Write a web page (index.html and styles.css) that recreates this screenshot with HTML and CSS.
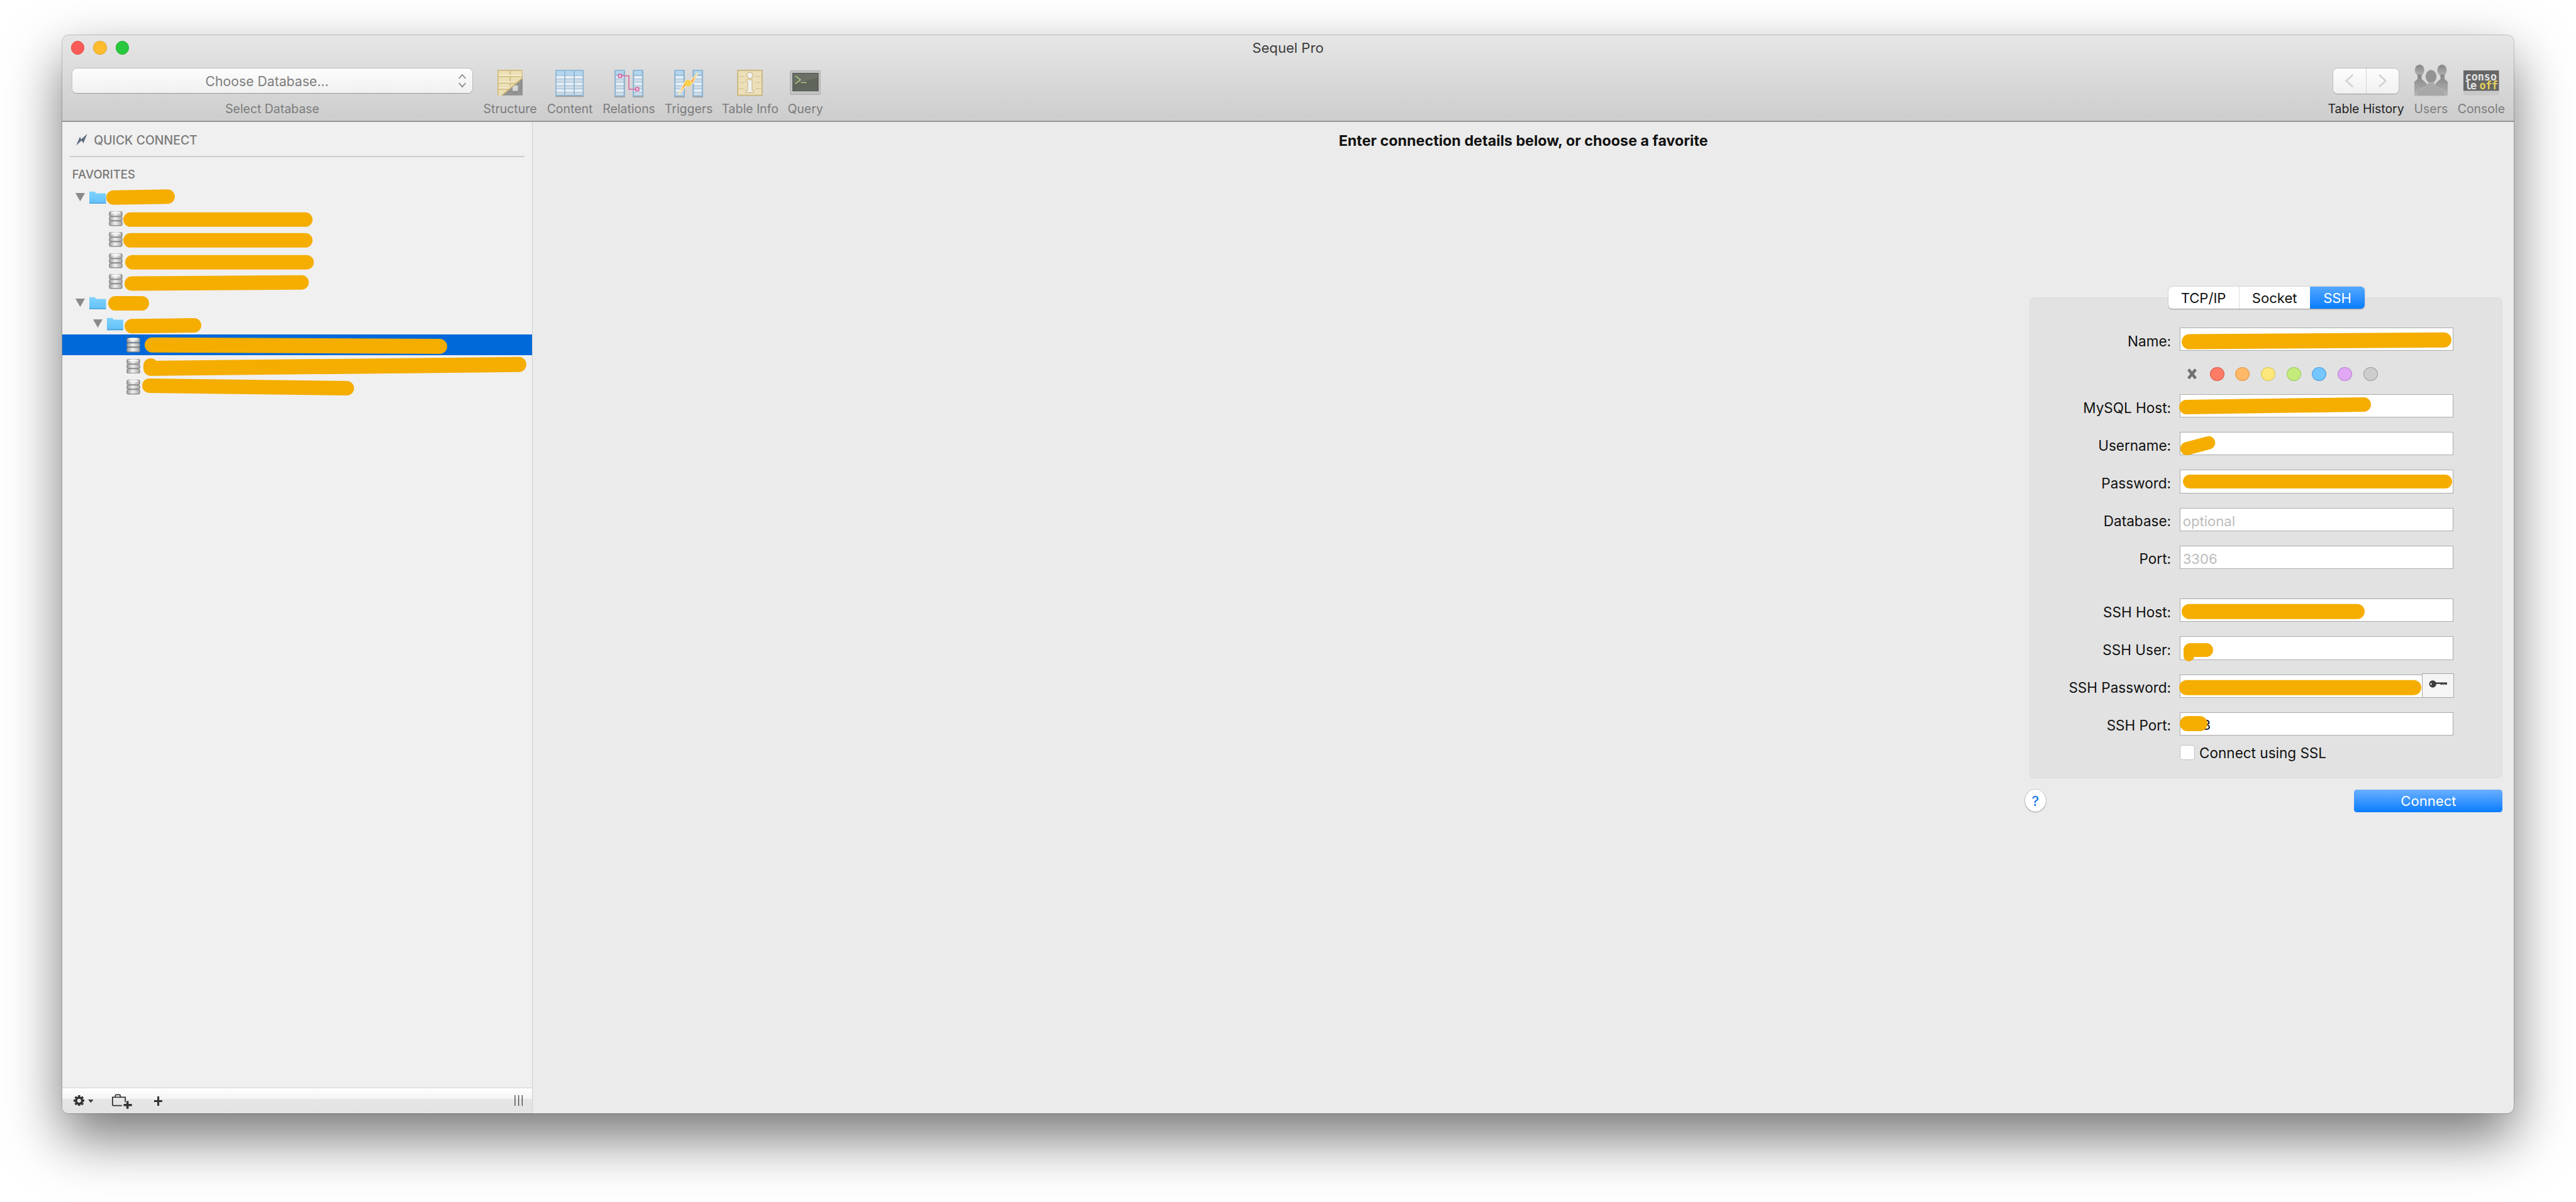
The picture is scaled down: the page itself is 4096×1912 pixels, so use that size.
FILE: index.html
```html
<!DOCTYPE html>
<html lang="en">
<head>
<meta charset="utf-8">
<title>Sequel Pro</title>
<link rel="stylesheet" href="styles.css">
</head>
<body>
<svg class="sprite" aria-hidden="true">
  <defs>
    <linearGradient id="blueFolder" x1="0" y1="0" x2="0" y2="1"><stop offset="0" stop-color="#7fd2fd"/><stop offset="1" stop-color="#62c0f8"/></linearGradient>
    <linearGradient id="cyl" x1="0" y1="0" x2="1" y2="0"><stop offset="0" stop-color="#9b9b9b"/><stop offset=".45" stop-color="#f2f2f2"/><stop offset="1" stop-color="#a5a5a5"/></linearGradient>
    <linearGradient id="person" x1="0" y1="0" x2="0" y2="1"><stop offset="0" stop-color="#858585"/><stop offset="1" stop-color="#b4b4b4"/></linearGradient>
    <g id="db">
      <rect x="1" y="2" width="23" height="8" rx="2" fill="url(#cyl)" stroke="#7f7f7f" stroke-width="1.2"/>
      <rect x="1" y="11" width="23" height="7" rx="2" fill="url(#cyl)" stroke="#7f7f7f" stroke-width="1.2"/>
      <rect x="1" y="19" width="23" height="8" rx="2" fill="url(#cyl)" stroke="#7f7f7f" stroke-width="1.2"/>
      <ellipse cx="12.5" cy="3.5" rx="9" ry="2" fill="#f6f6f6"/>
    </g>
    <g id="folder">
      <path d="M0 3a1 1 0 0 1 1-1h9l2 3h17a1 1 0 0 1 1 1v17a1 1 0 0 1-1 1H1a1 1 0 0 1-1-1z" fill="url(#blueFolder)"/>
      <rect y="22" width="30" height="2" fill="#4da6db"/>
    </g>
    <path id="tri" d="M0 0h17l-8.500 15z" fill="#8a8a8a"/>
    <g id="col">
      <rect y="2" width="19" height="48" rx="1" fill="#7d7d7d" opacity=".6"/>
      <rect width="19" height="48" rx="1" fill="#8fb6d3"/>
      <rect x="2.500" y="2" width="14" height="7" fill="#b4d6ef"/>
      <rect x="2.500" y="11" width="14" height="5" fill="#e8eff5"/>
      <rect x="2.500" y="17" width="14" height="5" fill="#cfdde8"/>
      <rect x="2.500" y="23" width="14" height="5" fill="#e8eff5"/>
      <rect x="2.500" y="29" width="14" height="5" fill="#cfdde8"/>
      <rect x="2.500" y="35" width="14" height="5" fill="#e8eff5"/>
      <rect x="2.500" y="41" width="14" height="5" fill="#cfdde8"/>
    </g>
  </defs>
</svg>
<div class="stage">
  <div class="window">
    <header class="chrome">
      <div class="titlebar">
        <div class="lights"><span class="light red"></span><span class="light amber"></span><span class="light green"></span></div>
        <div class="title">Sequel Pro</div>
        <div></div>
      </div>
      <div class="toolbar">
        <div class="tool w-db">
          <div class="tool-icon top-14">
            <div class="db-select">
              <span>Choose Database...</span>
              <svg class="stepper" viewBox="0 0 16 26"><path d="M2 9l6-7 6 7M2 17l6 7 6-7" fill="none" stroke="#8a8a8a" stroke-width="2"/></svg>
            </div>
          </div>
          <div class="tool-label">Select Database</div>
        </div>
        <div class="tool w-structure">
          <div class="tool-icon top-17">
            <svg class="i46" viewBox="0 0 46 46">
              <polygon points="0,0 46,0 46,14 8,46 0,46" fill="#ecdfb5"/>
              <path d="M1 46V1h44v13M23 1v28M1 12h44M1 24h30M1 35h18" fill="none" stroke="#d0bb7c" stroke-width="2"/>
              <path d="M2 10h42M2 22h28M2 33h17" stroke="#f6efd8" stroke-width="2"/>
              <polygon points="46,15 46,46 9,46" fill="#8f8f8f"/>
              <rect x="27" y="28" width="10" height="10" fill="#d6d6d6"/>
              <path d="M40 20v26M24 33v13M14 43h32" stroke="#a9a9a9" stroke-width="1" stroke-dasharray="2 2"/>
              <path d="M46 14L8 46" stroke="#c9b36e" stroke-width="2"/>
            </svg>
          </div>
          <div class="tool-label">Structure</div>
        </div>
        <div class="tool w-content">
          <div class="tool-icon top-17">
            <svg class="i51" viewBox="0 0 51 49">
              <rect y="2" width="51" height="47" fill="#7d7d7d" opacity=".6"/>
              <rect width="51" height="47" fill="#8fb6d3"/>
              <rect x="2" y="2" width="47" height="8" fill="#b4d6ef"/>
              <rect x="2" y="11" width="47" height="5" fill="#e8eff5"/>
              <rect x="2" y="17" width="47" height="5" fill="#cfdde8"/>
              <rect x="2" y="23" width="47" height="5" fill="#e8eff5"/>
              <rect x="2" y="29" width="47" height="5" fill="#cfdde8"/>
              <rect x="2" y="35" width="47" height="5" fill="#e8eff5"/>
              <rect x="2" y="41" width="47" height="4" fill="#cfdde8"/>
              <path d="M17 2v43M34 2v43" stroke="#8fb6d3" stroke-width="2"/>
            </svg>
          </div>
          <div class="tool-label">Content</div>
        </div>
        <div class="tool w-relations">
          <div class="tool-icon top-17">
            <svg class="i52" viewBox="0 0 52 50">
              <use href="#col"/><use href="#col" x="33"/>
              <path d="M9.500 11H26v24h15" fill="none" stroke="#d873ab" stroke-width="2"/>
              <rect x="7" y="8" width="6" height="6" fill="#f2b8d6" stroke="#c85f9b" stroke-width="1.500"/>
              <rect x="38" y="32" width="6" height="6" fill="#f2b8d6" stroke="#c85f9b" stroke-width="1.500"/>
            </svg>
          </div>
          <div class="tool-label">Relations</div>
        </div>
        <div class="tool w-triggers">
          <div class="tool-icon top-17">
            <svg class="i52" viewBox="0 0 52 50">
              <use href="#col"/><use href="#col" x="33"/>
              <polygon points="43,5 33,25 28,21 8,44 20,20 26,24" fill="#f6a241" stroke="#f7e6b4" stroke-width="2"/>
              <ellipse cx="25" cy="24" rx="6" ry="6" fill="#fbd04c"/>
            </svg>
          </div>
          <div class="tool-label">Triggers</div>
        </div>
        <div class="tool w-info">
          <div class="tool-icon top-17">
            <svg class="i46t" viewBox="0 0 46 47">
              <rect x="1" y="1" width="44" height="45" fill="#ecdfb9" stroke="#c6b377" stroke-width="2"/>
              <path d="M3 12h10M33 12h10M3 23h10M33 23h10M3 34h10M33 34h10" stroke="#d5c794" stroke-width="1.500"/>
              <circle cx="23" cy="10" r="5.500" fill="#f1f1f1" stroke="#cdbf8e" stroke-width="1.500"/>
              <path d="M17 18h10v19h3v4H16v-4h3V22h-2z" fill="#f1f1f1" stroke="#cdbf8e" stroke-width="1.500"/>
            </svg>
          </div>
          <div class="tool-label">Table Info</div>
        </div>
        <div class="tool w-query">
          <div class="tool-icon top-18">
            <svg class="i56" viewBox="0 0 56 44">
              <rect x=".5" y=".5" width="55" height="43" rx="2" fill="#c3c3c3" stroke="#a3a3a3"/>
              <rect x="5" y="5" width="46" height="32" fill="#5f655a" stroke="#4a4a4a"/>
              <polygon points="6,6 50,6 50,14 6,24" fill="#6a7065"/>
              <path d="M10 10l9 7-9 7M20 22h10" fill="none" stroke="#bcd68a" stroke-width="1.500"/>
            </svg>
          </div>
          <div class="tool-label">Query</div>
        </div>
        <div class="tool w-history push">
          <div class="tool-icon top-14">
            <div class="nav-pair">
              <span class="nav-seg"><svg class="chev" viewBox="0 0 16 24"><path d="M14 1L2 12l12 11" fill="none" stroke="#d2d2d2" stroke-width="3"/></svg></span>
              <span class="nav-seg"><svg class="chev" viewBox="0 0 16 24"><path d="M2 1l12 11L2 23" fill="none" stroke="#d2d2d2" stroke-width="3"/></svg></span>
            </div>
          </div>
          <div class="tool-label strong">Table History</div>
        </div>
        <div class="tool w-users">
          <div class="tool-icon top-5">
            <svg class="i64" viewBox="0 0 64 60">
              <g fill="url(#person)">
                <ellipse cx="10" cy="11" rx="9" ry="11"/>
                <path d="M0 60V33l6-5V19h8v9l6 5 6 7v20z"/>
                <ellipse cx="53" cy="11" rx="9" ry="11"/>
                <path d="M64 60V33l-6-5V19h-8v9l-6 5-6 7v20z"/>
              </g>
              <ellipse cx="32" cy="23" rx="10.500" ry="12.500" fill="#939393"/>
              <path d="M5 60v-7c0-5 7-6 14-9 5-2 7-5 7-9h12c0 4 2 7 7 9 7 3 14 4 14 9v7z" fill="#a8a8a8" stroke="#bcbcbc" stroke-width="1"/>
            </svg>
          </div>
          <div class="tool-label">Users</div>
        </div>
        <div class="tool w-console">
          <div class="tool-icon top-9">
            <svg class="i64c" viewBox="0 0 64 54">
              <rect width="64" height="9" fill="#dcdcdc"/>
              <rect y="9" width="64" height="37" fill="#666"/>
              <rect y="46" width="64" height="8" fill="#c9c9c9"/>
              <text x="3" y="27" class="con-a" textLength="57">conso</text>
              <text x="3" y="43" class="con-a" textLength="21">le</text>
              <text x="29" y="43" class="con-b" textLength="33">off</text>
            </svg>
          </div>
          <div class="tool-label">Console</div>
        </div>
      </div>
    </header>

    <div class="body">
      <aside class="sidebar">
        <div class="quick">
          <svg class="quick-icon" viewBox="0 0 20 21"><polygon points="0,21 7,5 9,10 20,0 13,17 10,12" fill="#5c6b80"/></svg>
          <span>QUICK CONNECT</span>
        </div>
        <div class="rule"></div>
        <div class="fav-head">FAVORITES</div>
        <div class="tree">
          <div class="row lv-0"><svg class="tri" viewBox="0 0 17 15"><use href="#tri"/></svg><svg class="folder" viewBox="0 0 30 24"><use href="#folder"/></svg><span class="strike s-f1"></span></div>
          <div class="row lv-1"><svg class="db" viewBox="0 0 25 28"><use href="#db"/></svg><span class="strike s-d1"></span></div>
          <div class="row lv-1"><svg class="db" viewBox="0 0 25 28"><use href="#db"/></svg><span class="strike s-d2"></span></div>
          <div class="row lv-1"><svg class="db" viewBox="0 0 25 28"><use href="#db"/></svg><span class="strike s-d3"></span></div>
          <div class="row lv-1"><svg class="db" viewBox="0 0 25 28"><use href="#db"/></svg><span class="strike s-d4"></span></div>
          <div class="row lv-0"><svg class="tri" viewBox="0 0 17 15"><use href="#tri"/></svg><svg class="folder" viewBox="0 0 30 24"><use href="#folder"/></svg><span class="strike s-f2"></span></div>
          <div class="row lv-f"><svg class="tri" viewBox="0 0 17 15"><use href="#tri"/></svg><svg class="folder" viewBox="0 0 30 24"><use href="#folder"/></svg><span class="strike s-f3"></span></div>
          <div class="row lv-2 selected"><svg class="db" viewBox="0 0 25 28"><use href="#db"/></svg><span class="strike s-n1"></span></div>
          <div class="row lv-2"><svg class="db" viewBox="0 0 25 28"><use href="#db"/></svg><span class="strike s-n2"></span></div>
          <div class="row lv-2"><svg class="db" viewBox="0 0 25 28"><use href="#db"/></svg><span class="strike s-n3"></span></div>
        </div>
        <footer class="side-foot">
          <svg class="gear" viewBox="0 0 20 20">
            <g stroke="#333" stroke-width="4" stroke-dasharray="4 12 4">
              <path d="M10 0v20"/><path d="M0 10h20"/><path d="M3 3l14 14"/><path d="M17 3L3 17"/>
            </g>
            <circle cx="10" cy="10" r="5.500" fill="none" stroke="#333" stroke-width="4"/>
          </svg>
          <svg class="caret" viewBox="0 0 10 6"><path d="M0 0h10L5 6z" fill="#444"/></svg>
          <svg class="add-folder" viewBox="0 0 37 27">
            <path d="M1 21V6h23v9M1 21h17M6 6V3.500a2 2 0 0 1 2-2h5a2 2 0 0 1 2 2V6" fill="none" stroke="#333" stroke-width="2"/>
            <path d="M28 13v14M21 20h15" stroke="#333" stroke-width="4"/>
          </svg>
          <svg class="plus" viewBox="0 0 15 17"><path d="M7.500 0v17M0 8.500h15" stroke="#333" stroke-width="3.500"/></svg>
          <svg class="grip" viewBox="0 0 15 20"><path d="M1 0v20M7.500 0v20M14 0v20" stroke="#444" stroke-width="1.500"/></svg>
        </footer>
      </aside>

      <main class="main">
        <h1 class="heading">Enter connection details below, or choose a favorite</h1>
        <section class="conn">
          <div class="tabs">
            <span class="tab t-tcp">TCP/IP</span><span class="tab t-sock">Socket</span><span class="tab t-ssh">SSH</span>
          </div>
          <div class="panel">
            <div class="field"><label>Name:</label><div class="input"><span class="strike s-name"></span></div></div>
            <div class="colors">
              <svg class="clear-x" viewBox="0 0 17 20"><path d="M2 2l13 16M15 2L2 18" stroke="#6f6f6f" stroke-width="5"/></svg>
              <span class="dot c-red"></span><span class="dot c-orange"></span><span class="dot c-yellow"></span><span class="dot c-green"></span><span class="dot c-blue"></span><span class="dot c-purple"></span><span class="dot c-gray"></span>
            </div>
            <div class="group">
              <div class="field"><label>MySQL Host:</label><div class="input"><span class="strike s-host"></span></div></div>
              <div class="field"><label>Username:</label><div class="input"><span class="strike s-user"></span></div></div>
              <div class="field"><label>Password:</label><div class="input"><span class="strike s-pass"></span></div></div>
              <div class="field"><label>Database:</label><div class="input ph">optional</div></div>
              <div class="field"><label>Port:</label><div class="input ph">3306</div></div>
            </div>
            <div class="group group-ssh">
              <div class="field"><label>SSH Host:</label><div class="input"><span class="strike s-shost"></span></div></div>
              <div class="field"><label>SSH User:</label><div class="input"><span class="strike s-suser"></span></div></div>
              <div class="field"><label>SSH Password:</label><div class="input with-key"><span class="strike s-spass"></span><span class="key-btn"><svg class="key" viewBox="0 0 33 16"><circle cx="7" cy="8" r="6.500" fill="#3d3d3d"/><circle cx="4" cy="8" r="1.500" fill="#f5f5f5"/><path d="M12 5h21v3l-2 2-2-2-2 2-2-2-2 2-3-2h-8z" fill="#3d3d3d"/></svg></span></div></div>
              <div class="field"><label>SSH Port:</label><div class="input"><span class="port-digit">3</span><span class="strike s-sport"></span></div></div>
            </div>
            <div class="ssl"><span class="check"></span><span>Connect using SSL</span></div>
          </div>
          <div class="conn-foot">
            <span class="help">?</span>
            <span class="connect">Connect</span>
          </div>
        </section>
      </main>
    </div>
  </div>
</div>
</body>
</html>
```
FILE: styles.css
```css
* { box-sizing: border-box; }
html, body { margin: 0; padding: 0; background: #fff; overflow: hidden; }
body { font-family: Inter, "Liberation Sans", sans-serif; }
.sprite { position: absolute; width: 0; height: 0; }

/* All lengths below are in reference pixels; the stage is scaled once to fit the window. */
.stage {
  zoom: 0.88352;
  width: 4636px;
  height: 2164px;
  padding: 63px 112px 160px 112px;
}
.window {
  width: 4412px;
  height: 1941px;
  border-radius: 12px;
  overflow: hidden;
  display: flex;
  flex-direction: column;
  background: #ebebeb;
  box-shadow: 0 0 0 1px rgba(0,0,0,.2), 0 44px 100px rgba(0,0,0,.54);
}

/* chrome */
.chrome {
  height: 157px;
  flex: none;
  background: linear-gradient(#e6e6e6, #cdcdcd);
  border-bottom: 3px solid #969696;
}
.titlebar {
  height: 46px;
  display: grid;
  grid-template-columns: 1fr auto 1fr;
  align-items: center;
  padding-left: 16px;
  padding-right: 16px;
}
.lights { display: flex; gap: 16px; }
.light { width: 24px; height: 24px; border-radius: 50%; border: 1px solid; }
.red { background: #fc5b57; border-color: #e2463f; }
.amber { background: #fdbc2e; border-color: #e09e1e; }
.green { background: #28c93f; border-color: #1fad2c; }
.title { font-size: 25px; color: #3c3c3c; }

.toolbar { display: flex; gap: 19px; padding-left: 18px; padding-right: 17px; height: 108px; }
.tool { display: flex; flex-direction: column; align-items: center; flex: none; }
.tool-icon { height: 70px; display: flex; justify-content: center; align-items: flex-start; width: 100%; }
.top-5 { padding-top: 5px; }
.top-9 { padding-top: 9px; }
.top-14 { padding-top: 14px; }
.top-17 { padding-top: 17px; }
.top-18 { padding-top: 18px; }
.tool-label { font-size: 22px; line-height: 34px; color: #7c7c7c; white-space: nowrap; }
.tool-label.strong { color: #232323; }
.w-db { width: 720px; margin-right: 1px; }
.w-structure { width: 96px; }
.w-content { width: 81px; }
.w-relations { width: 94px; }
.w-triggers { width: 83px; }
.w-info { width: 100px; }
.w-query { width: 61px; }
.w-history { width: 136px; }
.w-users { width: 60px; }
.w-console { width: 83px; }
.push { margin-left: auto; }
.i46 { width: 46px; height: 46px; }
.i46t { width: 46px; height: 47px; }
.i51 { width: 51px; height: 49px; }
.i52 { width: 52px; height: 50px; }
.i56 { width: 56px; height: 44px; }
.i64 { width: 64px; height: 60px; }
.i64c { width: 64px; height: 54px; }
.con-a, .con-b { font-family: "DejaVu Sans Mono", monospace; font-size: 19px; font-weight: 700; }
.con-a { fill: #e4e4e4; }
.con-b { fill: #e6d15c; }

.db-select {
  width: 100%;
  height: 45px;
  border-radius: 8px;
  background: linear-gradient(#fdfdfd, #f0f0f0);
  box-shadow: 0 0 0 1px rgba(0,0,0,.12), 0 1px 1px rgba(0,0,0,.18);
  display: flex;
  align-items: center;
  justify-content: center;
  position: relative;
  font-size: 24px;
  color: #7d7d7d;
}
.db-select span { margin-right: 19px; }
.stepper { position: absolute; right: 10px; top: 10px; width: 16px; height: 26px; }

.nav-pair {
  width: 118px;
  height: 46px;
  border-radius: 8px;
  display: flex;
  background: linear-gradient(#fdfdfd, #f0f0f0);
  box-shadow: 0 0 0 1px rgba(0,0,0,.12), 0 1px 1px rgba(0,0,0,.18);
}
.nav-seg { flex: 1; display: flex; align-items: center; justify-content: center; }
.nav-seg + .nav-seg { border-left: 2px solid #d4d4d4; }
.chev { width: 16px; height: 24px; }

/* body */
.body { flex: 1; display: flex; min-height: 0; }
.sidebar {
  width: 847px;
  flex: none;
  display: flex;
  flex-direction: column;
  background: #f0f0f0;
  border-right: 1px solid #d0d0d0;
}
.quick {
  height: 61px;
  padding: 3px 0 0 25px;
  display: flex;
  align-items: center;
  gap: 12px;
  font-size: 22px;
  font-weight: 500;
  color: #7a7a7a;
}
.quick-icon { width: 20px; height: 21px; }
.rule { height: 2px; background: #cdcdcd; margin: 0 14px; flex: none; }
.fav-head {
  height: 53px;
  padding: 8px 0 0 18px;
  display: flex;
  align-items: center;
  font-size: 21px;
  font-weight: 500;
  color: #777;
  flex: none;
}
.tree { flex: 1; }
.row { height: 38px; display: flex; align-items: center; }
.row.selected { background: #0069d9; }
.lv-0 { padding-left: 24px; }
.lv-f { padding-left: 55px; }
.lv-1 { padding-left: 84px; }
.lv-2 { padding-left: 116px; }
.tri { width: 17px; height: 15px; margin-right: 8px; flex: none; }
.folder { width: 30px; height: 24px; flex: none; }
.db { width: 25px; height: 28px; flex: none; }

.strike { display: block; background: #f5ad00; border-radius: 14px; flex: none; position: relative; }
.s-f1 { width: 123px; height: 26px; transform: rotate(-1deg); }
.s-f2 { width: 73px; height: 26px; margin-left: 4px; margin-top: 2px; }
.s-f3 { width: 138px; height: 26px; margin-left: 2px; transform: rotate(-.8deg) translateY(3px); }
.s-d1 { width: 341px; height: 26px; margin-left: 1px; transform: translateY(2px); }
.s-d2 { width: 341px; height: 26px; margin-left: 1px; transform: translateY(2px); }
.s-d3 { width: 340px; height: 26px; margin-left: 4px; transform: translateY(3px); }
.s-d4 { width: 332px; height: 26px; margin-left: 3px; transform: translateY(3px) rotate(-.4deg); }
.s-n1 { width: 544px; height: 27px; margin-left: 7px; transform: translateY(1px) rotate(.3deg); }
.s-n2 { width: 689px; height: 27px; margin-left: 5px; transform: translateY(1px) rotate(-.6deg); }
.s-n2::after { content: ""; position: absolute; left: 0; top: -5px; width: 26px; height: 28px; border-radius: 13px; background: #f5ad00; }
.s-n3 { width: 381px; height: 26px; margin-left: 3px; transform: rotate(.7deg); }

.side-foot {
  height: 46px;
  flex: none;
  border-top: 2px solid #cfcfcf;
  background: linear-gradient(#fff, #f4f4f4 43%, #e6e6e6 43%, #e3e3e3);
  display: flex;
  align-items: flex-start;
}
.gear { width: 20px; height: 20px; margin: 12px 0 0 20px; }
.caret { width: 10px; height: 6px; margin: 20px 0 0 6px; }
.add-folder { width: 37px; height: 27px; margin: 10px 0 0 34px; }
.plus { width: 15px; height: 17px; margin: 15px 0 0 38px; }
.grip { width: 15px; height: 20px; margin: 12px 17px 0 auto; }

/* main */
.main { flex: 1; min-width: 0; }
.heading {
  margin: 0;
  height: 66px;
  display: flex;
  align-items: center;
  justify-content: center;
  font-size: 26.400px;
  font-weight: 700;
  color: #111;
}
.conn { width: 860px; margin: 230px 20px 0 auto; }
.tabs {
  width: 354px;
  height: 40px;
  margin: 0 0 -21px 258px;
  position: relative;
  display: flex;
  border-radius: 7px;
  overflow: hidden;
  background: #fff;
  box-shadow: 0 1px 2px rgba(0,0,0,.35);
  font-size: 25px;
  color: #111;
}
.tab { display: flex; align-items: center; justify-content: center; }
.t-tcp { width: 128px; border-right: 2px solid #dedede; }
.t-sock { width: 127px; }
.t-ssh { width: 99px; color: #fff; background: linear-gradient(#54a8ff, #0a7cff); }

.panel {
  margin-left: 8px;
  height: 866px;
  background: #e2e2e2;
  border: 1px solid #dcdcdc;
  border-radius: 8px;
  padding-top: 54px;
  display: flex;
  flex-direction: column;
}
.field { display: grid; grid-template-columns: 254px 492px; column-gap: 16px; align-items: center; font-size: 25.500px; color: #111; }
.field label { text-align: right; padding-top: 6px; }
.input {
  height: 42px;
  background: #fff;
  border: 2px solid #ababab;
  display: flex;
  align-items: center;
  padding-left: 4px;
  position: relative;
  font-size: 25px;
}
.input.ph { color: #bcbcbc; padding-top: 6px; }
.colors { display: flex; align-items: center; gap: 20px; height: 25px; margin: 28.500px 0 24.500px 283px; }
.clear-x { width: 17px; height: 20px; margin-right: 4px; }
.dot { width: 26px; height: 25px; border-radius: 50%; border: 2px solid; }
.c-red { background: #ff7b66; border-color: #d9594a; }
.c-orange { background: #ffb866; border-color: #e09a4a; }
.c-yellow { background: #fbe77a; border-color: #d9c85a; }
.c-green { background: #c3ec7c; border-color: #9ecb5e; }
.c-blue { background: #75c6ff; border-color: #4f9fd9; }
.c-purple { background: #e0a8f5; border-color: #b985d0; }
.c-gray { background: #cdcdcd; border-color: #a0a0a0; }
.group { display: flex; flex-direction: column; gap: 26px; }
.group-ssh { margin-top: 54px; }
.s-name { width: 486px; height: 27px; margin-left: -2px; transform: translateY(2.500px) rotate(-.4deg); }
.s-host { width: 345px; height: 26px; margin-left: -6px; transform: rotate(-.8deg); }
.s-user { width: 64px; height: 24px; margin-left: -5px; transform: translateY(4px) rotate(-15deg); }
.s-pass { width: 485px; height: 26px; }
.s-shost { width: 329px; height: 27px; margin-left: -2px; transform: translateY(2px); }
.s-suser { width: 54px; height: 25px; margin-left: 1px; transform: translateY(3.500px); }
.s-suser::after { content: ""; position: absolute; left: 0; top: 6px; width: 20px; height: 27px; border-radius: 10px; background: #f5ad00; }
.s-spass { width: 435px; height: 27px; margin-left: -6px; transform: translateY(3px); }
.port-digit { margin: 4px 0 0 35px; width: 15px; flex: none; }
.s-sport { width: 49px; height: 27px; margin-left: -55px; }
.key-btn {
  position: absolute;
  right: -2px;
  top: -3px;
  width: 57px;
  height: 44px;
  background: #f5f5f5;
  border: 2px solid #a5a5a5;
  display: flex;
  align-items: center;
  justify-content: center;
}
.key { width: 33px; height: 16px; margin-top: -4px; }
.ssl { display: flex; align-items: center; gap: 8px; height: 28px; margin: 17px 0 0 270px; font-size: 25.500px; color: #111; }
.check { width: 27px; height: 28px; border-radius: 5px; background: #fff; border: 1px solid #c0c0c0; }
.conn-foot { display: flex; justify-content: space-between; align-items: flex-start; margin-top: 21px; }
.help {
  width: 38px;
  height: 39px;
  border-radius: 50%;
  background: #fff;
  box-shadow: 0 0 0 1px rgba(0,0,0,.12), 0 1px 2px rgba(0,0,0,.3);
  display: flex;
  align-items: center;
  justify-content: center;
  color: #1c78e6;
  font-size: 25px;
  font-weight: 500;
}
.connect {
  width: 267px;
  height: 40px;
  border-radius: 5px;
  background: linear-gradient(#6ab0ff, #0a7cff);
  color: #fff;
  font-size: 25px;
  display: flex;
  align-items: center;
  justify-content: center;
}
```
